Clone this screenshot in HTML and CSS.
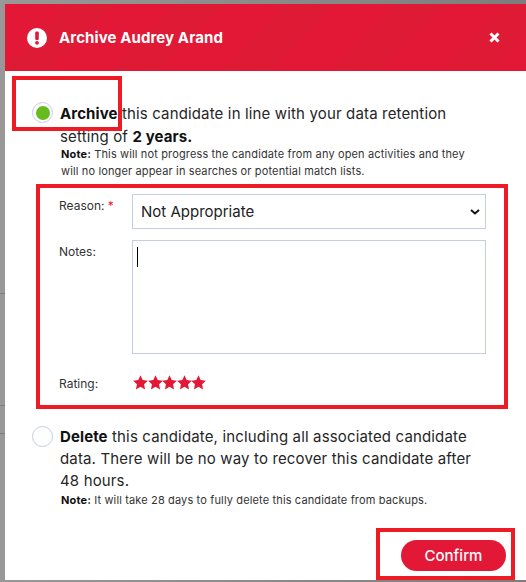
FILE: index.html
```html
<!DOCTYPE html>
<html lang="en">
<head>
<meta charset="utf-8">
<title>Archive Audrey Arand</title>
<link rel="stylesheet" href="styles.css">
</head>
<body>
<div class="modal">
  <header class="modal-head">
    <svg class="alert-icon" viewBox="0 0 20 20" aria-hidden="true"><circle cx="10" cy="10" r="10" fill="#fff"/><rect x="8.2" y="3.6" width="3.6" height="8.4" rx="1.2" fill="#e31837"/><circle cx="10" cy="14.8" r="1.9" fill="#e31837"/></svg>
    <h1 class="modal-title">Archive Audrey Arand</h1>
    <svg class="close-icon" viewBox="0 0 11 11" aria-hidden="true"><path d="M1.500 1.500l8 8M9.500 1.500l-8 8" stroke="#fff" stroke-width="3" fill="none"/></svg>
  </header>
  <div class="modal-body">
    <div class="option option-archive">
      <span class="radio radio-on"><span class="radio-dot"></span></span>
      <div class="option-text">
        <p class="lead"><b>Archive</b> this candidate in line with your data retention setting of <b>2 years.</b></p>
        <p class="note"><b>Note:</b> This will not progress the candidate from any open activities and they will no longer appear in searches or potential match lists.</p>
      </div>
    </div>
    <form class="details">
      <div class="field field-reason">
        <label class="field-label">Reason: <span class="req">*</span></label>
        <div class="select"><span>Not Appropriate</span>
          <svg class="chev" viewBox="0 0 10 6" aria-hidden="true"><path d="M1 1l4 3.400L9 1" stroke="#111" stroke-width="2" fill="none"/></svg>
        </div>
      </div>
      <div class="field field-notes">
        <label class="field-label">Notes:</label>
        <div class="textarea"><span class="caret"></span></div>
      </div>
      <div class="field field-rating">
        <label class="field-label">Rating:</label>
        <div class="stars">
          <svg viewBox="0 0 24 24" aria-hidden="true"><path d="M12 0.500l3.500 7.600 8.300 1-6.100 5.700 1.600 8.200L12 18.900 4.700 23l1.600-8.200L0.200 9.100l8.300-1z"/></svg>
          <svg viewBox="0 0 24 24" aria-hidden="true"><path d="M12 0.500l3.500 7.600 8.300 1-6.100 5.700 1.600 8.200L12 18.900 4.700 23l1.600-8.200L0.200 9.100l8.300-1z"/></svg>
          <svg viewBox="0 0 24 24" aria-hidden="true"><path d="M12 0.500l3.500 7.600 8.300 1-6.100 5.700 1.600 8.200L12 18.900 4.700 23l1.600-8.200L0.200 9.100l8.300-1z"/></svg>
          <svg viewBox="0 0 24 24" aria-hidden="true"><path d="M12 0.500l3.500 7.600 8.300 1-6.100 5.700 1.600 8.200L12 18.900 4.700 23l1.600-8.200L0.200 9.100l8.300-1z"/></svg>
          <svg viewBox="0 0 24 24" aria-hidden="true"><path d="M12 0.500l3.500 7.600 8.300 1-6.100 5.700 1.600 8.200L12 18.900 4.700 23l1.600-8.200L0.200 9.100l8.300-1z"/></svg>
        </div>
      </div>
    </form>
    <div class="option option-delete">
      <span class="radio"></span>
      <div class="option-text">
        <p class="lead"><b>Delete</b> this candidate, including all associated candidate data. There will be no way to recover this candidate after 48 hours.</p>
        <p class="note"><b>Note:</b> It will take 28 days to fully delete this candidate from backups.</p>
      </div>
    </div>
    <div class="actions"><button type="button" class="confirm">Confirm</button></div>
  </div>
</div>
<div class="mark mark-archive"></div>
<div class="mark mark-form"></div>
<div class="mark mark-confirm"></div>
</body>
</html>
```
FILE: styles.css
```css
* { box-sizing: border-box; }
html, body { margin: 0; height: 100%; }
body {
  position: relative;
  width: 526px;
  height: 582px;
  overflow: hidden;
  padding: 4px 0 0 5px;
  background:
    linear-gradient(#7c7c7c, #7c7c7c) 0 293px / 5px 1px no-repeat,
    linear-gradient(#7c7c7c, #7c7c7c) 0 405px / 5px 1px no-repeat,
    linear-gradient(#7c7c7c, #7c7c7c) 0 433px / 5px 1px no-repeat,
    linear-gradient(90deg, #989898, #7d7d7d);
  font-family: Inter, "Noto Sans", sans-serif;
  color: #222;
}
.modal { width: 521px; height: 576px; background: #fff; }
.modal-head {
  height: 67px;
  display: flex;
  align-items: center;
  padding: 0 26px 0 22px;
  color: #fff;
  background: repeating-linear-gradient(135deg, #e31837 0 44px, #de1a35 44px 78px);
}
.alert-icon { width: 20px; height: 20px; flex: none; }
.modal-title { flex: 1; margin: 0 0 0 12px; font-size: 15px; font-weight: 700; letter-spacing: .1px; }
.close-icon { width: 11px; height: 11px; flex: none; }
.modal-body { padding: 31px 20px 0 27px; }
.option { display: flex; align-items: flex-start; }
.radio {
  flex: none;
  width: 21px;
  height: 21px;
  margin-right: 7px;
  border: 1px solid #c5cde2;
  border-radius: 50%;
  display: flex;
  align-items: center;
  justify-content: center;
}
.radio-dot { width: 14px; height: 14px; border-radius: 50%; background: #66bb1f; }
.option-text { flex: 1; }
.lead { margin: 0; font-size: 15px; line-height: 22px; letter-spacing: .15px; color: #262626; }
.lead b { color: #111; letter-spacing: .1px; }
.note { margin: 0 0 0 1px; font-size: 11px; line-height: 17px; letter-spacing: .14px; color: #333; }
.note b { color: #111; }
.option-archive .lead { max-width: 400px; line-height: 23px; }
.option-archive .note { max-width: 415px; margin-top: -2px; }
.option-delete .lead { max-width: 420px; }
.details { padding: 14px 0 0 27px; }
.field { display: flex; align-items: flex-start; }
.field-label { width: 73px; flex: none; font-size: 12px; line-height: 16px; color: #333; }
.req { color: #e31837; }
.field-reason .field-label { padding-top: 4px; }
.field-notes { margin-top: 11px; }
.field-notes .field-label { padding-top: 4px; }
.select {
  width: 354px;
  height: 35px;
  border: 1px solid #c5cde2;
  padding: 0 5px 0 8px;
  display: flex;
  align-items: center;
  justify-content: space-between;
  font-size: 15px;
  color: #222;
}
.chev { width: 10px; height: 6px; }
.textarea { width: 354px; height: 114px; border: 1px solid #c5cde2; padding: 6px 4px; }
.caret { display: block; width: 1px; height: 20px; background: #000; }
.field-rating { margin-top: 21px; align-items: center; }
.stars { display: flex; margin: 0 0 2px 1px; }
.stars svg { width: 15px; height: 15px; margin-right: -0.4px; fill: #e31837; }
.option-delete { margin-top: 34px; }
.actions { display: flex; justify-content: flex-end; padding: 31px 0 0 0; }
.confirm {
  width: 105px;
  height: 31px;
  border: 0;
  border-radius: 16px;
  background: #e31837;
  color: #fff;
  font: 500 15px Inter, "Noto Sans", sans-serif;
}
.mark { position: absolute; border: 4px solid #ed1c24; pointer-events: none; }
.mark-archive { left: 12px; top: 76px; width: 110px; height: 55px; }
.mark-form { left: 36px; top: 184px; width: 472px; height: 225px; }
.mark-confirm { left: 376px; top: 528px; width: 139px; height: 52px; }
```
